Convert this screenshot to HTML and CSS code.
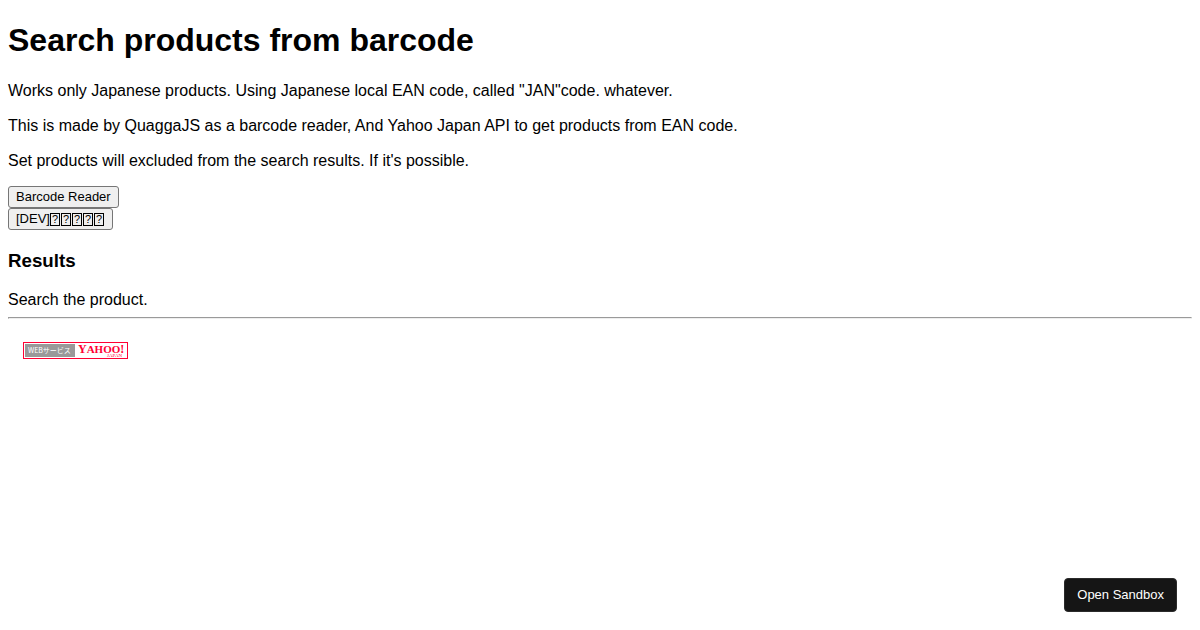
FILE: index.html
```html
<!DOCTYPE html>
<html>
	<head>
		<meta charset="UTF-8">
		<title>Search products from barcode</title>
		<link rel="stylesheet" href="styles.css">
	</head>
	<body>
		<h1>Search products from barcode</h1>
		<p>Works only Japanese products. Using Japanese local EAN code, called "JAN"code. whatever.</p>
		<p>This is made by QuaggaJS as a barcode reader, And Yahoo Japan API to get products from EAN code.</p>
		<p>Set products will excluded from the search results. If it's possible.</p>
		<div class="actions">
			<button type="button">Barcode Reader</button>
			<button type="button">[DEV]<span class="box">?</span><span class="box">?</span><span class="box">?</span><span class="box">?</span><span class="box">?</span></button>
		</div>
		<h3>Results</h3>
		<div id="result">Search the product.</div>
		<hr>
		<a class="credit" href="#">
			<svg width="103" height="15" viewBox="0 0 103 15">
				<rect x="1" y="1" width="50" height="13" fill="#999999"/>
				<text class="service" x="4" y="10">WEBサービス</text>
				<text class="yahoo" x="54" y="10"><tspan class="big">Y</tspan>AHOO<tspan class="big">!</tspan></text>
				<text class="japan" x="83" y="14">JAPAN</text>
			</svg>
		</a>
		<button type="button" class="sandbox">Open Sandbox</button>
	</body>
</html>
```

FILE: styles.css
```css
body{
	margin: 0;
	padding: 8px;
	font-family: Helvetica, "Liberation Sans", Arial, sans-serif;
	line-height: 19px;
}
h1{
	margin: 13px 0 22px;
	line-height: 38px;
}
p{
	margin: 16px 0;
}
h3{
	margin: 20px 0 18px;
	line-height: 22px;
}
.actions{
	display: flex;
	flex-direction: column;
	align-items: flex-start;
}
button{
	height: 22px;
	padding: 0 7px 2px;
	border: 1px solid #767676;
	border-radius: 3px;
	background: #efefef;
	color: #000;
	font-family: inherit;
	font-size: 13px;
}
/* missing glyphs */
.box{
	display: inline-block;
	box-sizing: border-box;
	width: 10px;
	height: 13px;
	margin-right: 1px;
	border: 1px solid #000;
	font-size: 11px;
	line-height: 11px;
	text-align: center;
}
hr{
	margin: 8px 0;
}
.credit{
	display: inline-block;
	margin: 15px;
	border: 1px solid #ff0033;
	background: #fff;
}
.credit svg{
	display: block;
}
.service{
	font: 7px "Noto Sans CJK JP", sans-serif;
	fill: #fff;
}
.yahoo{
	font: bold 11px "Liberation Serif", serif;
	fill: #ff0033;
}
.yahoo .big{
	font-size: 12px;
}
.japan{
	font: 5px "Liberation Serif", serif;
	fill: #ff0033;
}
.sandbox{
	position: fixed;
	right: 23px;
	bottom: 18px;
	height: 34px;
	padding: 0 12px 2px;
	border: 1px solid #2b2b2b;
	border-radius: 4px;
	background: #151515;
	color: #fff;
}
```
